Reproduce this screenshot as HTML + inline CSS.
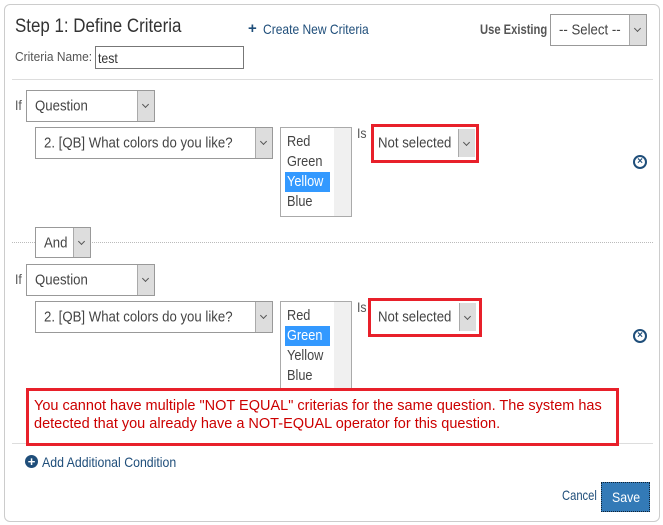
<!DOCTYPE html>
<html><head><style>
*{box-sizing:border-box;margin:0;padding:0}
body{width:663px;height:525px;background:#fff;font-family:"Liberation Sans",sans-serif;color:#555;position:relative;overflow:hidden;font-size:14px}
.a{position:absolute;white-space:nowrap}
.n{transform:scaleX(.88);transform-origin:left top}
.sel{position:absolute;border:1px solid #999;background:#fff;font-size:15px;color:#444}
.sel span{position:absolute;left:8px;top:50%;transform:translateY(-50%) scaleX(.88);transform-origin:left center}
.sel i{position:absolute;right:0;top:0;bottom:0;width:17px;background:#ddd;border-left:1px solid #aaa}
.sel i:after{content:"";position:absolute;left:5px;top:11px;width:4px;height:4px;border-right:1px solid #555;border-bottom:1px solid #555;transform:rotate(45deg)}
.lb{position:absolute;border:1px solid #aaa;background:#fff;font-size:15px;color:#444}
.lb .sb{position:absolute;right:0;top:0;bottom:0;width:17px;background:#f0f0f0}
.lb div.o{position:absolute;left:4px;width:45px;height:20px;line-height:20px;padding-left:2px}
.lb div.o b{font-weight:normal;display:inline-block;transform:scaleX(.85);transform-origin:left}
.hl{background:#3399ff;color:#fff}
.red{position:absolute;border:3px solid #e8202a}
.x{position:absolute;width:14px;height:14px;border:2px solid #1f4e7a;border-radius:50%;font-size:10px;font-weight:bold;color:#1f4e7a;text-align:center;line-height:10px}
</style></head><body>
<div class="a" style="left:4px;top:4px;width:656px;height:518px;border:1px solid #ccc;border-radius:6px"></div>
<div class="a n" style="left:15px;top:16px;font-size:19px;color:#333;transform:scaleX(.89)">Step 1: Define Criteria</div>
<div class="a" style="left:248px;top:20px;font-size:15px;color:#1f4e7a;font-weight:bold">+</div>
<div class="a n" style="left:263px;top:21px;font-size:14px;color:#1f4e7a;transform:scaleX(.86)">Create New Criteria</div>
<div class="a n" style="left:480px;top:21px;font-size:14px;font-weight:bold;color:#555;transform:scaleX(.8)">Use Existing</div>
<div class="sel" style="left:550px;top:14px;width:97px;height:32px"><span>-- Select --</span><i></i></div>
<div class="a n" style="left:15px;top:49px;font-size:13px;transform:scaleX(.92)">Criteria Name:</div>
<div class="a" style="left:95px;top:46px;width:149px;height:23px;border:1px solid #777;font-size:14px;color:#333;padding:3px 2px"><div class="n">test</div></div>
<div class="a" style="left:12px;top:79px;width:641px;height:1px;background:#ddd"></div>

<div class="a n" style="left:15px;top:97px;font-size:14px">If</div>
<div class="sel" style="left:26px;top:90px;width:129px;height:32px"><span>Question</span><i></i></div>
<div class="sel" style="left:35px;top:127px;width:238px;height:32px"><span>2. [QB] What colors do you like?</span><i></i></div>
<div class="lb" style="left:280px;top:127px;width:72px;height:90px"><div class="sb"></div>
<div class="o" style="top:4px"><b>Red</b></div><div class="o" style="top:24px"><b>Green</b></div><div class="o hl" style="top:44px"><b>Yellow</b></div><div class="o" style="top:64px"><b>Blue</b></div></div>
<div class="a n" style="left:357px;top:125px;font-size:14px">Is</div>
<div class="red" style="left:371px;top:124px;width:108px;height:39px"></div>
<div class="sel" style="left:374px;top:127px;width:101px;height:32px;border:none"><span style="left:4px">Not selected</span><i style="top:2px;bottom:2px"></i></div>
<div class="x" style="left:633px;top:155px">×</div>

<div class="a" style="left:12px;top:242px;width:641px;border-top:1px dotted #bbb"></div>
<div class="sel" style="left:35px;top:227px;width:56px;height:31px"><span>And</span><i></i></div>

<div class="a n" style="left:15px;top:271px;font-size:14px">If</div>
<div class="sel" style="left:26px;top:264px;width:129px;height:32px"><span>Question</span><i></i></div>
<div class="sel" style="left:35px;top:301px;width:238px;height:32px"><span>2. [QB] What colors do you like?</span><i></i></div>
<div class="lb" style="left:280px;top:301px;width:72px;height:90px"><div class="sb"></div>
<div class="o" style="top:4px"><b>Red</b></div><div class="o hl" style="top:24px"><b>Green</b></div><div class="o" style="top:44px"><b>Yellow</b></div><div class="o" style="top:64px"><b>Blue</b></div></div>
<div class="a n" style="left:357px;top:299px;font-size:14px">Is</div>
<div class="red" style="left:368px;top:298px;width:114px;height:39px"></div>
<div class="sel" style="left:372px;top:301px;width:104px;height:32px;border:none"><span style="left:6px">Not selected</span><i style="top:2px;bottom:2px"></i></div>
<div class="x" style="left:633px;top:329px">×</div>

<div class="a" style="left:12px;top:443px;width:641px;height:1px;background:#ddd"></div>
<div class="a" style="left:26px;top:388px;width:593px;height:58px;border:3px solid #e8202a;background:#fff;color:#c00;font-size:14.5px;line-height:18px;padding:6px 5px">
<div>You cannot have multiple "NOT EQUAL" criterias for the same question. The system has</div>
<div>detected that you already have a NOT-EQUAL operator for this question.</div></div>

<div class="a" style="left:25px;top:455px;width:13px;height:13px;border-radius:50%;background:#1f4e7a;color:#fff;font-size:13px;font-weight:bold;line-height:13px;text-align:center">+</div>
<div class="a n" style="left:42px;top:454px;font-size:14px;color:#1f4e7a">Add Additional Condition</div>
<div class="a n" style="left:562px;top:487px;font-size:14px;color:#1f4e7a;transform:scaleX(.8)">Cancel</div>
<div class="a" style="left:601px;top:482px;width:49px;height:30px;background:#337ab7;border:1px dotted #123;color:#fff;font-size:14px;line-height:28px;padding-left:10px"><div class="n">Save</div></div>
</body></html>
